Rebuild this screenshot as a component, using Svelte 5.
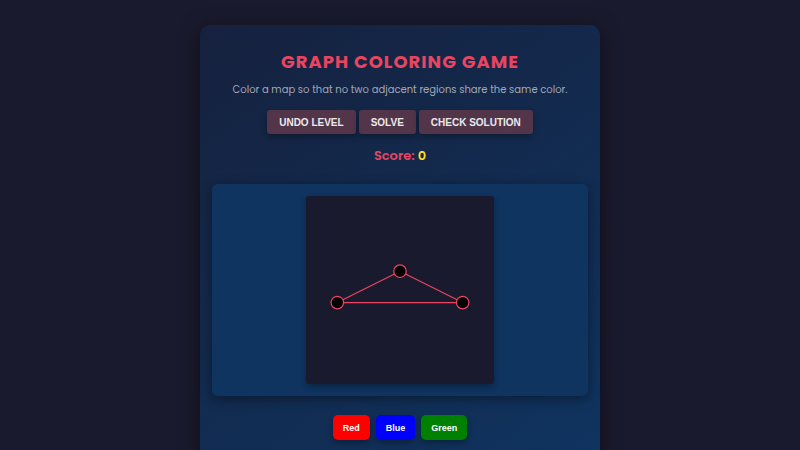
<script>
  const nodes = [
    { x: 50, y: 170 },
    { x: 250, y: 170 },
    { x: 150, y: 120 }
  ];
  const edges = [[0, 1], [1, 2], [2, 0]];
  const colors = ['Red', 'Blue', 'Green'];

  let score = $state(0);
  let selected = $state('Red');
  let fills = $state(['black', 'black', 'black']);

  function undo() {
    fills = fills.map(() => 'black');
  }

  function solve() {
    fills = colors.map((c) => c.toLowerCase());
  }

  function check() {
    if (fills.every((f) => f !== 'black') && edges.every(([a, b]) => fills[a] !== fills[b])) {
      score += 1;
    }
  }

  function paint(i) {
    fills[i] = selected.toLowerCase();
  }
</script>

<main>
  <section class="card">
    <h1>Graph Coloring Game</h1>
    <p class="intro">Color a map so that no two adjacent regions share the same color.</p>
    <div class="actions">
      <button onclick={undo}>Undo Level</button>
      <button onclick={solve}>Solve</button>
      <button onclick={check}>Check Solution</button>
    </div>
    <p class="score">Score: <span>{score}</span></p>
    <div class="board">
      <svg viewBox="0 0 300 300" role="group" aria-label="Map graph">
        {#each edges as [a, b]}
          <line x1={nodes[a].x} y1={nodes[a].y} x2={nodes[b].x} y2={nodes[b].y} />
        {/each}
        {#each nodes as n, i}
          <circle
            cx={n.x}
            cy={n.y}
            r="10"
            fill={fills[i]}
            role="button"
            tabindex="0"
            aria-label={`Region ${i + 1}`}
            onclick={() => paint(i)}
            onkeydown={(e) => e.key === 'Enter' && paint(i)}
          />
        {/each}
      </svg>
    </div>
    <div class="palette">
      {#each colors as c}
        <button class={c.toLowerCase()} onclick={() => (selected = c)}>{c}</button>
      {/each}
    </div>
  </section>
</main>

<style>
  :global(body) {
    margin: 0;
    background: #1a1a2e;
  }
  main {
    display: flex;
    justify-content: center;
    min-height: 100vh;
    box-sizing: border-box;
    padding: 25px 12px;
    font-family: Poppins, Inter, sans-serif;
    text-align: center;
  }
  .card {
    width: 100%;
    max-width: 400px;
    box-sizing: border-box;
    padding: 25px 12px;
    border-radius: 10px;
    background: linear-gradient(145deg, #16213e, #0f3460);
    box-shadow: 0 5px 20px rgba(0, 0, 0, 0.5);
  }
  h1 {
    margin: 0 0 8px;
    font-size: 18px;
    line-height: 24px;
    font-weight: 700;
    letter-spacing: 1px;
    text-transform: uppercase;
    color: #e94560;
  }
  .intro {
    margin: 0 0 12px;
    font-size: 10px;
    line-height: 16px;
    color: #a2a8b8;
  }
  button {
    border: 0;
    font-family: "Liberation Sans", Arial, sans-serif;
    cursor: pointer;
  }
  .actions {
    display: flex;
    justify-content: center;
    gap: 3px;
    margin-bottom: 12px;
  }
  .actions button {
    height: 24px;
    padding: 0 12px;
    border-radius: 3px;
    background: #53354a;
    color: #eaeaea;
    font-size: 10px;
    font-weight: 700;
    text-transform: uppercase;
    box-shadow: 0 3px 6px rgba(0, 0, 0, 0.3);
  }
  .score {
    margin: 0 0 18px;
    font-size: 13px;
    line-height: 20px;
    font-weight: 600;
    color: #e94560;
  }
  .score span {
    color: #ffde17;
  }
  .board {
    display: flex;
    justify-content: center;
    margin-bottom: 19px;
    padding: 12px;
    border-radius: 6px;
    background: #0f3460;
    box-shadow: 0 3px 12px rgba(0, 0, 0, 0.4);
  }
  svg {
    display: block;
    width: 50%;
    min-width: 188px;
    border-radius: 3px;
    background: #1a1a2e;
    box-shadow: 0 3px 6px rgba(0, 0, 0, 0.3);
  }
  line {
    stroke: #e94560;
    stroke-width: 2;
  }
  circle {
    stroke: #e94560;
    stroke-width: 2;
    cursor: pointer;
  }
  .palette {
    display: flex;
    justify-content: center;
    gap: 6px;
  }
  .palette button {
    height: 25px;
    padding: 0 10px;
    border-radius: 5px;
    color: #fff;
    font-size: 9px;
    font-weight: 700;
    box-shadow: 0 3px 6px rgba(0, 0, 0, 0.3);
  }
  .palette .red {
    background: #ff0000;
  }
  .palette .blue {
    background: #0000ff;
  }
  .palette .green {
    background: #008000;
  }
</style>
